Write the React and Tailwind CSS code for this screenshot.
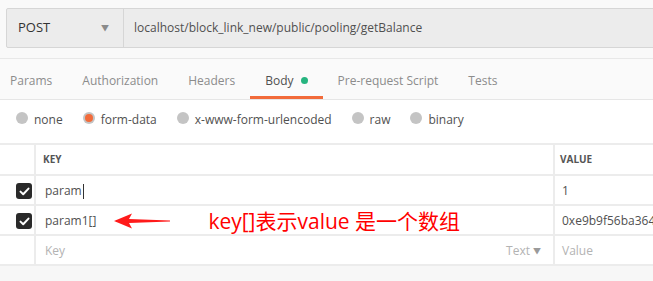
import React from 'react';

const tabs = ['Params', 'Authorization', 'Headers', 'Body', 'Pre-request Script', 'Tests'];
const bodyTypes = ['none', 'form-data', 'x-www-form-urlencoded', 'raw', 'binary'];

const Check = () => (
    <div className="w-[16px] h-[16px] rounded-[3px] bg-[#2a2a2a] flex items-center justify-center">
        <svg width="11" height="9" viewBox="0 0 11 9">
            <path d="M1.5 4.6 L4.2 7.2 L9.5 1.6" fill="none" stroke="#fff" strokeWidth="2" strokeLinecap="round" strokeLinejoin="round" />
        </svg>
    </div>
);

const App = () => {
    return (
        <div className="w-[653px] h-[281px] overflow-hidden bg-[#f9f9f9] text-[12px] text-[#505050]" style={{ fontFamily: '"Open Sans", "Noto Sans CJK SC", sans-serif' }}>
            <div className="pt-[8px] pl-[6px] pb-[10px] border-b border-[#e8e8e8]">
                <div className="flex h-[40px] w-[700px] bg-[#ececec] border border-[#d6d6d6] rounded-[2px]">
                    <div className="w-[117px] shrink-0 flex items-center justify-between pl-[11px] pr-[14px] border-r border-[#d6d6d6]">
                        <span className="text-[13px] text-[#333]">POST</span>
                        <span className="text-[8px] text-[#8a8a8a]">▼</span>
                    </div>
                    <div className="flex items-center pl-[10px] text-[12px] text-[#505050]">localhost/block_link_new/public/pooling/getBalance</div>
                </div>
            </div>
            <div className="flex h-[41px] border-b border-[#e6e6e6] bg-[#fafafa] pl-[10px]">
                {tabs.map((t) => (
                    <div key={t} className={`relative flex items-center pt-[3px] mr-[30px] ${t === 'Body' ? 'text-[#505050]' : 'text-[#8c8c8c]'}`}>
                        {t === 'Body' && <div className="absolute left-[-15px] right-[-15px] bottom-0 h-[3px] bg-[#f26b3a]" />}
                        <span>{t}</span>
                        {t === 'Body' && <span className="ml-[7px] w-[7px] h-[7px] rounded-full bg-[#26b47f]" />}
                    </div>
                ))}
            </div>
            <div className="bg-white pt-[10px] h-[43px] flex items-start pl-[16px]">
                {bodyTypes.map((b) => (
                    <div key={b} className="flex items-center mr-[20px] h-[20px]">
                        <span className="w-[12px] h-[12px] rounded-full bg-[#c4c4c4] flex items-center justify-center mr-[6px] mt-[-4px]">
                            {b === 'form-data' && <span className="w-[8px] h-[8px] rounded-full bg-[#f26b3a]" />}
                        </span>
                        <span>{b}</span>
                    </div>
                ))}
            </div>
            <div className="bg-white border-t-2 border-[#ececec] grid grid-cols-[36px_519px_1fr] w-[653px]">
                <div className="h-[31px] border-r-2 border-b-2 border-[#ececec]" />
                <div className="h-[31px] border-r-2 border-b-2 border-[#ececec] flex items-center pl-[7px] text-[10px] font-bold text-[#555]">KEY</div>
                <div className="h-[31px] border-b-2 border-[#ececec] flex items-center pl-[5px] text-[10px] font-bold text-[#555]">VALUE</div>

                <div className="h-[30px] pt-[2px] border-r-2 border-b-2 border-[#ececec] flex items-center justify-end pr-[2px]"><Check /></div>
                <div className="h-[30px] pt-[2px] border-r-2 border-b-2 border-[#ececec] flex items-center pl-[9px]">
                    <span>param</span><span className="w-px h-[15px] bg-[#333] ml-px" />
                </div>
                <div className="h-[30px] pt-[2px] border-b-2 border-[#ececec] flex items-center pl-[7px]">1</div>

                <div className="h-[30px] pt-[2px] border-r-2 border-b-2 border-[#ececec] flex items-center justify-end pr-[2px]"><Check /></div>
                <div className="h-[30px] pt-[2px] border-r-2 border-b-2 border-[#ececec] flex items-center pl-[9px]">
                    <span>param1[]</span>
                    <svg className="ml-[18px]" width="57" height="16" viewBox="0 0 57 16">
                        <path d="M0 8 L18 0.5 L15 6 L56 7.4 L56 8.6 L15 10 L18 15.5 Z" fill="#ff1a1a" />
                    </svg>
                    <span className="ml-[37px] text-[21px] text-[#ff0000] leading-none">key[]表示value 是一个数组</span>
                </div>
                <div className="h-[30px] pt-[2px] border-b-2 border-[#ececec] flex items-center pl-[7px] whitespace-nowrap overflow-hidden">0xe9b9f56ba364</div>

                <div className="h-[30px] pt-[2px] border-r-2 border-b-2 border-[#ececec]" />
                <div className="h-[30px] pt-[2px] border-r-2 border-b-2 border-[#ececec] flex items-center justify-between pl-[9px] pr-[12px] text-[#b3b3b3]">
                    <span>Key</span>
                    <span className="flex items-center">Text<span className="text-[8px] ml-[3px] text-[#9a9a9a]">▼</span></span>
                </div>
                <div className="h-[30px] pt-[2px] border-b-2 border-[#ececec] flex items-center pl-[7px] text-[#b3b3b3]">Value</div>
            </div>
            <div className="h-[20px] bg-[#f7f7f7]" />
        </div>
    );
};

export default App;
